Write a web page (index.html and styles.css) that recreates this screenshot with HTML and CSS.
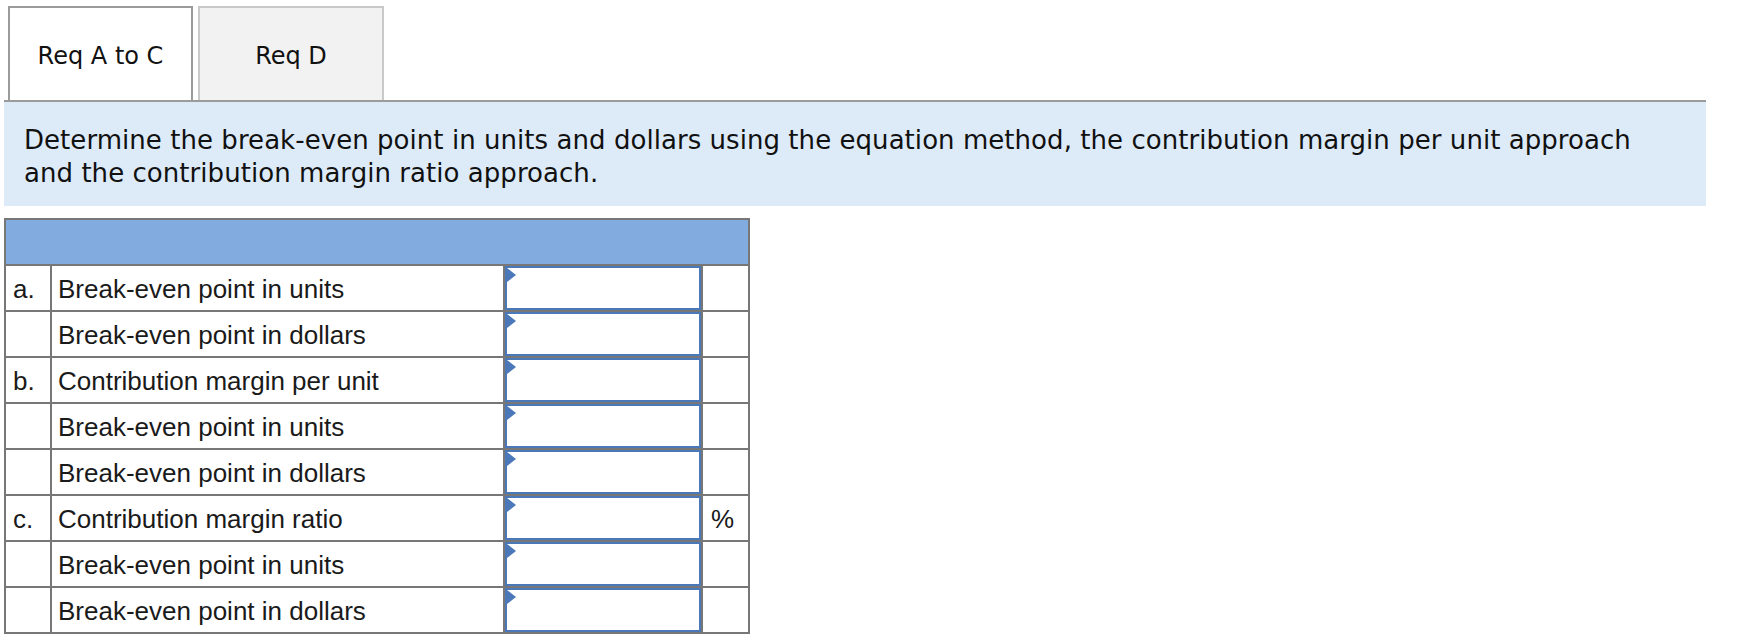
FILE: index.html
```html
<!DOCTYPE html>
<html>
<head>
<meta charset="utf-8">
<link rel="stylesheet" href="styles.css">
</head>
<body>
<div class="page">
  <div class="tabs">
    <div class="tab tab-active">Req A to C</div>
    <div class="tab tab-idle">Req D</div>
  </div>
  <div class="instructions">Determine the break-even point in units and dollars using the equation method, the contribution margin per unit approach and the contribution margin ratio approach.</div>
  <div class="grid">
    <div class="head"></div>

    <div class="cell letter">a.</div>
    <div class="cell label">Break-even point in units</div>
    <div class="cell entry"></div>
    <div class="cell unit"></div>

    <div class="cell letter"></div>
    <div class="cell label">Break-even point in dollars</div>
    <div class="cell entry"></div>
    <div class="cell unit"></div>

    <div class="cell letter">b.</div>
    <div class="cell label">Contribution margin per unit</div>
    <div class="cell entry"></div>
    <div class="cell unit"></div>

    <div class="cell letter"></div>
    <div class="cell label">Break-even point in units</div>
    <div class="cell entry"></div>
    <div class="cell unit"></div>

    <div class="cell letter"></div>
    <div class="cell label">Break-even point in dollars</div>
    <div class="cell entry"></div>
    <div class="cell unit"></div>

    <div class="cell letter">c.</div>
    <div class="cell label">Contribution margin ratio</div>
    <div class="cell entry"></div>
    <div class="cell unit">%</div>

    <div class="cell letter"></div>
    <div class="cell label">Break-even point in units</div>
    <div class="cell entry"></div>
    <div class="cell unit"></div>

    <div class="cell letter"></div>
    <div class="cell label">Break-even point in dollars</div>
    <div class="cell entry"></div>
    <div class="cell unit"></div>
  </div>
</div>
</body>
</html>
```

FILE: styles.css
```css
html, body {
  margin: 0;
  padding: 0;
  background: #ffffff;
}

.page {
  padding: 6px 0 0 4px;
  width: 1702px;
}

.tabs {
  display: flex;
  gap: 5px;
  padding-left: 4px;
  border-bottom: 2px solid #9b9b9b;
}

.tab {
  height: 94px;
  display: flex;
  align-items: center;
  justify-content: center;
  font-family: "DejaVu Sans", Verdana, sans-serif;
  font-size: 24px;
  color: #111111;
  box-sizing: border-box;
  padding-top: 4px;
}

.tab-active {
  width: 185px;
  background: #ffffff;
  border: 2px solid #9b9b9b;
  border-bottom: none;
}

.tab-idle {
  width: 186px;
  background: #f2f2f2;
  border: 2px solid #c9c9c9;
  border-bottom: none;
}

.instructions {
  background: #ddebf8;
  font-family: "DejaVu Sans", Verdana, sans-serif;
  font-size: 26px;
  letter-spacing: 0.05px;
  line-height: 33px;
  color: #111111;
  height: 104px;
  box-sizing: border-box;
  padding: 22px 60px 0 20px;
  margin-bottom: 12px;
}

.grid {
  display: grid;
  grid-template-columns: 44px 451px 196px 45px;
  grid-auto-rows: 44px;
  gap: 2px;
  padding: 2px;
  background: #777777;
  width: max-content;
  font-family: "Liberation Sans", Arial, sans-serif;
  font-size: 26px;
  color: #1a1a1a;
}

.head {
  grid-column: 1 / -1;
  background: #82abdf;
}

.cell {
  background: #ffffff;
  display: flex;
  align-items: center;
  padding-top: 2px;
  box-sizing: border-box;
}

.letter {
  padding-left: 7px;
}

.label {
  padding-left: 6px;
}

.entry {
  position: relative;
  border: 2px solid #4a78b8;
}

.entry::before {
  content: "";
  position: absolute;
  left: 0;
  top: 0;
  width: 0;
  height: 0;
  border-left: 9px solid #4a78b8;
  border-top: 7px solid transparent;
  border-bottom: 7px solid transparent;
}

.unit {
  padding-left: 8px;
}
```
